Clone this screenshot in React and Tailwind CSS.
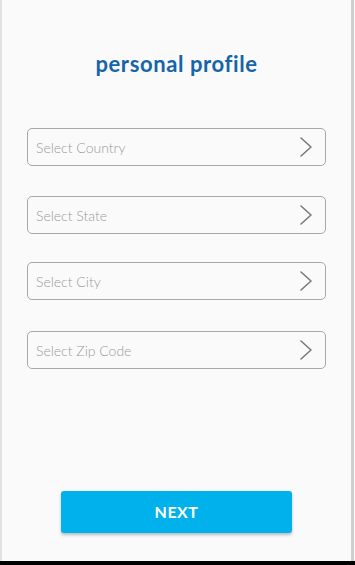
import React from "react";

function Field({ label, mt }) {
  return (
    <div className={`${mt} mx-[25px] h-[38px] rounded-[5px] border border-[#a8a8a8] flex items-center justify-between pl-[8px] pr-[12px] bg-[#fafafa]`}>
      <span className="text-[14px] font-light text-[#9a9a9a]" style={{ fontFamily: "Lato, 'Noto Sans', sans-serif" }}>{label}</span>
      <svg width="14" height="22" viewBox="0 0 14 22" fill="none">
        <path d="M2 2 L12 11 L2 20" stroke="#7a7a7a" strokeWidth="1.6" strokeLinecap="round" strokeLinejoin="round" />
      </svg>
    </div>
  );
}

export default function App() {
  return (
    <div className="w-[355px] h-[565px] flex flex-col bg-[#fafafa] overflow-hidden" style={{ fontFamily: "Lato, 'Noto Sans', sans-serif" }}>
      <div className="flex-1 flex flex-col border-l-2 border-l-[#e2e2e2] border-r-[3px] border-r-[#cfcfcf] mr-[1px]">
        <h1 className="mt-[50px] text-center text-[22px] font-bold text-[#1565a8] tracking-[0.6px] leading-[28px]">personal profile</h1>
        <Field label="Select Country" mt="mt-[50px]" />
        <Field label="Select State" mt="mt-[30px]" />
        <Field label="Select City" mt="mt-[28px]" />
        <Field label="Select Zip Code" mt="mt-[31px]" />
        <div className="flex-1" />
        <button className="mb-[28px] w-[231px] h-[42px] rounded-[3px] bg-[#00b1ec] text-white text-[16px] font-bold tracking-[0.5px] shadow-[0_2px_3px_rgba(0,0,0,0.25)] ml-[59px]">NEXT</button>
      </div>
      <div className="h-[4px] bg-black" />
    </div>
  );
}
